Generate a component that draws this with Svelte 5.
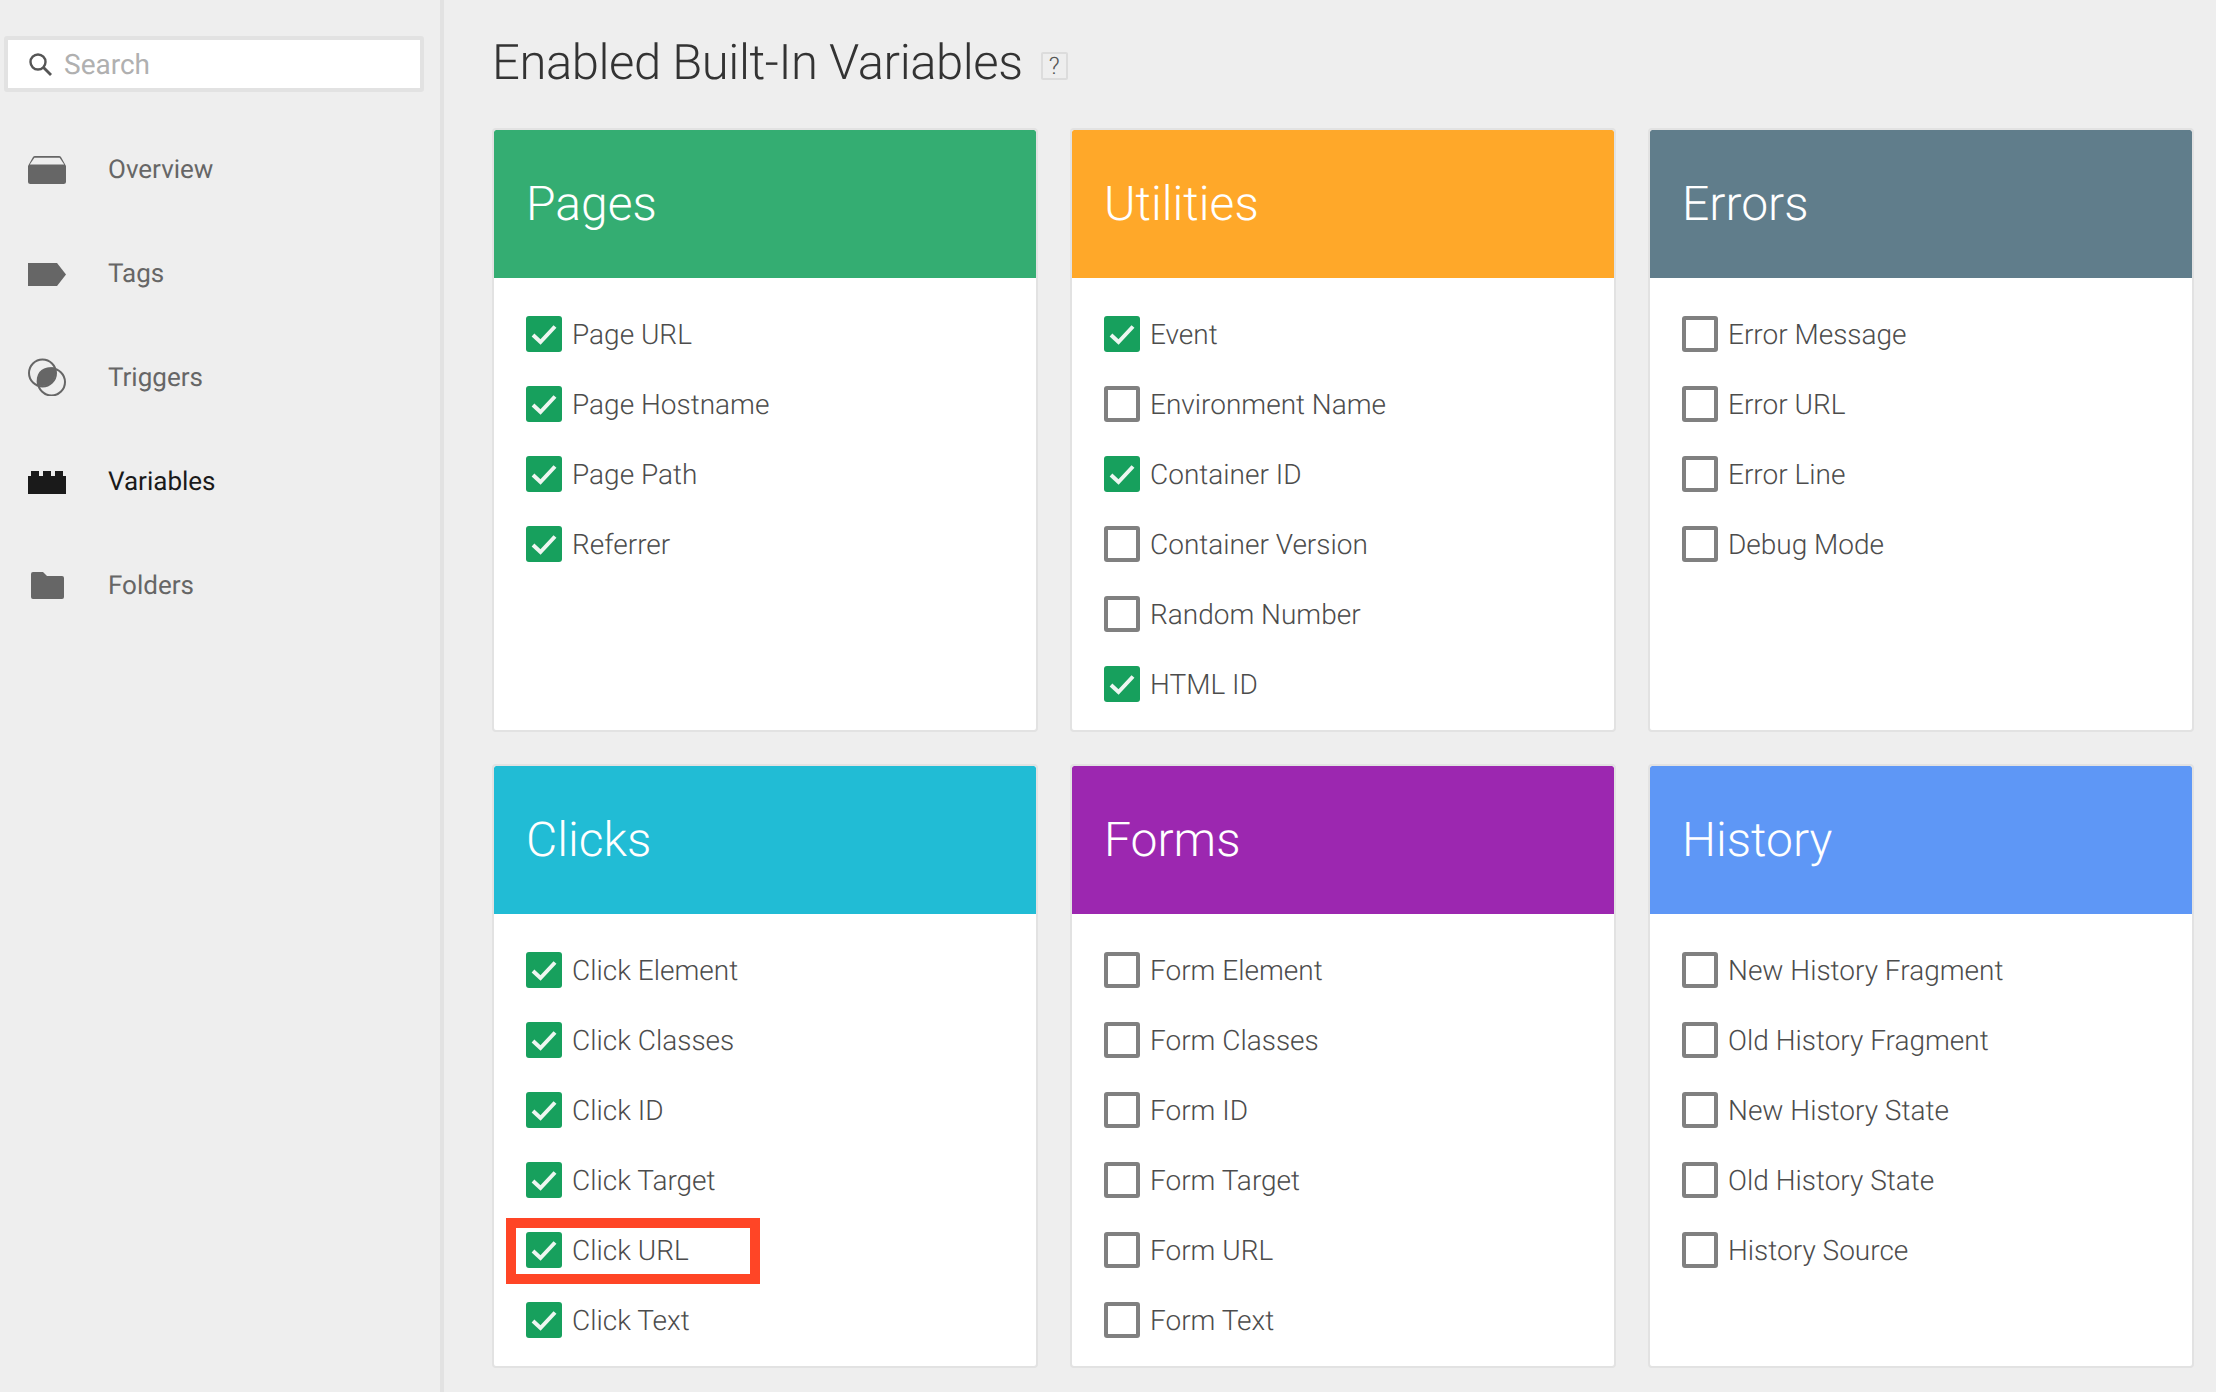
<script>
	const nav = [
		{ label: 'Overview', icon: 'overview' },
		{ label: 'Tags', icon: 'tags' },
		{ label: 'Triggers', icon: 'triggers' },
		{ label: 'Variables', icon: 'variables', active: true },
		{ label: 'Folders', icon: 'folders' }
	];

	const groups = [
		{
			title: 'Pages',
			color: '#34ad72',
			items: [['Page URL', 1], ['Page Hostname', 1], ['Page Path', 1], ['Referrer', 1]]
		},
		{
			title: 'Utilities',
			color: '#ffa829',
			items: [
				['Event', 1],
				['Environment Name', 0],
				['Container ID', 1],
				['Container Version', 0],
				['Random Number', 0],
				['HTML ID', 1]
			]
		},
		{
			title: 'Errors',
			color: '#607d8b',
			items: [['Error Message', 0], ['Error URL', 0], ['Error Line', 0], ['Debug Mode', 0]]
		},
		{
			title: 'Clicks',
			color: '#21bcd5',
			items: [
				['Click Element', 1],
				['Click Classes', 1],
				['Click ID', 1],
				['Click Target', 1],
				['Click URL', 1, true],
				['Click Text', 1]
			]
		},
		{
			title: 'Forms',
			color: '#9c27b0',
			items: [
				['Form Element', 0],
				['Form Classes', 0],
				['Form ID', 0],
				['Form Target', 0],
				['Form URL', 0],
				['Form Text', 0]
			]
		},
		{
			title: 'History',
			color: '#5e97f6',
			items: [
				['New History Fragment', 0],
				['Old History Fragment', 0],
				['New History State', 0],
				['Old History State', 0],
				['History Source', 0]
			]
		}
	];
</script>

<div class="page">
	<aside class="sidebar">
		<div class="search">
			<svg class="search-icon" width="24" height="24" viewBox="0 0 24 24">
				<circle cx="10" cy="10" r="7.5" fill="none" stroke="#555" stroke-width="2.4" />
				<path d="M15.5 15.5 L23 23" stroke="#555" stroke-width="2.8" fill="none" />
			</svg>
			<span>Search</span>
		</div>
		<nav>
			{#each nav as item}
				<div class="nav-item" class:active={item.active}>
					<svg width="38" height="38" viewBox="0 0 38 38" fill="currentColor">
						{#if item.icon === 'overview'}
							<path d="M0 16 L5 7 Q5.600 6 7 6 L31 6 Q32.400 6 33 7 L38 16 L38 31.500 Q38 34 35.500 34 L2.500 34 Q0 34 0 31.500 Z M1.800 14.500 L36.200 14.500 L31.600 7.700 L6.400 7.700 Z" fill-rule="evenodd" />
						{:else if item.icon === 'tags'}
							<path d="M0 9 L29 9 L38 20.500 L29 32 L0 32 Z" />
						{:else if item.icon === 'triggers'}
							<circle cx="14.500" cy="15" r="13.500" fill="none" stroke="currentColor" stroke-width="2" />
							<circle cx="23.500" cy="24" r="13.500" fill="none" stroke="currentColor" stroke-width="2" />
							<path d="M9 27.500 C7 14.500 14 7.500 27 9.500 C29.500 22.500 22 30 9 27.500 Z" />
						{:else if item.icon === 'variables'}
							<path d="M0 14 L3 14 L3 9 L11 9 L11 14 L15 14 L15 9 L23 9 L23 14 L27 14 L27 9 L35 9 L35 14 L38 14 L38 32 L0 32 Z" />
						{:else}
							<path d="M3 8 Q3 6 5 6 L15 6 L19 10 L34 10 Q36 10 36 12 L36 31 Q36 33 34 33 L5 33 Q3 33 3 31 Z" />
						{/if}
					</svg>
					<span class="nav-label">{item.label}</span>
				</div>
			{/each}
		</nav>
	</aside>

	<main>
		<header class="heading">
			<h1>Enabled Built-In Variables</h1>
			<span class="help">?</span>
		</header>
		<div class="grid">
			{#each groups as group}
				<section class="card">
					<div class="card-head" style="background: {group.color}">{group.title}</div>
					<ul>
						{#each group.items as [label, checked, marked]}
							<li>
								<span class="box" class:checked={checked}>
									{#if checked}
										<svg width="36" height="36" viewBox="0 0 36 36">
											<path d="M7 19 L14.500 26 L29 10.500" fill="none" stroke="#eef6f1" stroke-width="4" />
										</svg>
									{/if}
								</span>
								<span class="label">{label}</span>
								{#if marked}
									<span class="marker"></span>
								{/if}
							</li>
						{/each}
					</ul>
				</section>
			{/each}
		</div>
	</main>
</div>

<style>
	:global(body) {
		background: #eeeeee;
	}

	.page {
		display: flex;
		height: 1392px;
		overflow: hidden;
		font-family: Roboto, 'Liberation Sans', sans-serif;
		text-rendering: geometricPrecision;
	}

	.sidebar {
		box-sizing: border-box;
		width: 444px;
		flex: none;
		padding: 36px 0 0 4px;
		border-right: 4px solid #e2e2e2;
	}

	.search {
		box-sizing: border-box;
		display: flex;
		align-items: center;
		gap: 12px;
		width: 420px;
		height: 56px;
		padding-left: 20px;
		background: #fff;
		border: 4px solid #e2e2e2;
		border-radius: 3px;
		font-size: 28px;
		color: #b0b0b0;
	}

	.search-icon {
		flex: none;
	}

	nav {
		margin-top: 25px;
	}

	.nav-item {
		display: flex;
		align-items: center;
		gap: 42px;
		height: 104px;
		padding-left: 24px;
		font-size: 26px;
		color: #666;
	}

	.nav-label {
		margin-top: 2px;
	}

	.nav-item.active {
		color: #1a1a1a;
	}

	main {
		flex: 1;
		padding-left: 48px;
	}

	.heading {
		display: flex;
		align-items: center;
		gap: 18px;
		height: 128px;
		padding-bottom: 4px;
		box-sizing: border-box;
	}

	h1 {
		margin: 0;
		font-size: 49px;
		letter-spacing: -0.44px;
		font-weight: 300;
		color: #333;
	}

	.help {
		box-sizing: border-box;
		display: flex;
		align-items: center;
		justify-content: center;
		width: 27px;
		height: 28px;
		margin-top: 8px;
		border: 2px solid #dcdcdc;
		border-radius: 2px;
		font-size: 24px;
		font-weight: 300;
		color: #555;
	}

	.grid {
		display: grid;
		grid-template-columns: repeat(3, 546px);
		grid-auto-rows: 604px;
		gap: 32px;
	}

	.card {
		box-sizing: border-box;
		background: #fff;
		border: 2px solid #e2e2e2;
		border-radius: 4px;
		overflow: hidden;
	}

	.card-head {
		box-sizing: border-box;
		height: 148px;
		padding-left: 32px;
		line-height: 148px;
		font-size: 48px;
		font-weight: 300;
		color: #fff;
		border-radius: 2px 2px 0 0;
	}

	ul {
		margin: 0;
		padding: 38px 0 0 32px;
		list-style: none;
	}

	li {
		position: relative;
		display: flex;
		align-items: center;
		gap: 10px;
		height: 36px;
		margin-bottom: 34px;
		font-size: 28px;
		font-weight: 300;
		color: #4c4c4c;
	}

	.box {
		box-sizing: border-box;
		flex: none;
		width: 36px;
		height: 36px;
		background: #fff;
		border: 4px solid #808080;
		border-radius: 3px;
	}

	.box.checked {
		background: #17a05d;
		border: 0;
	}

	.box svg {
		display: block;
	}

	.marker {
		position: absolute;
		left: -20px;
		top: -14px;
		box-sizing: border-box;
		width: 254px;
		height: 66px;
		border: 10px solid #ff4526;
	}
</style>
